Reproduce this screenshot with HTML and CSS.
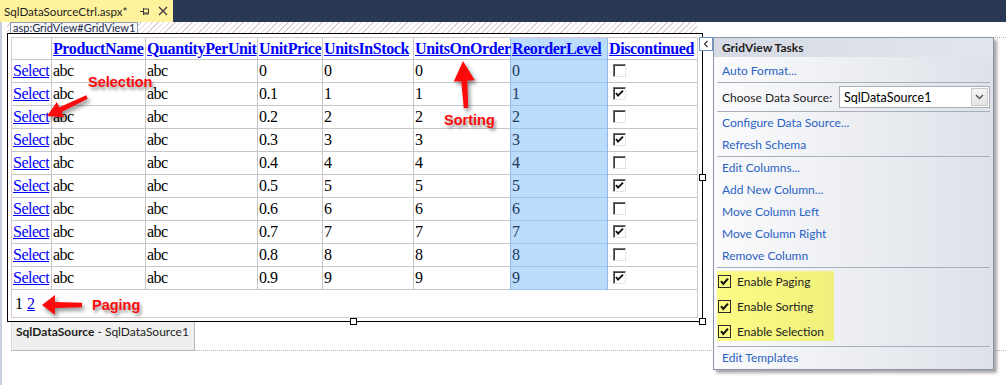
FILE: index.html
```html
<!DOCTYPE html>
<html>
<head>
<meta charset="utf-8">
<title>SqlDataSourceCtrl.aspx</title>
<link rel="stylesheet" href="styles.css">
</head>
<body>
<div class="page">
  <header class="topbar">
    <div class="tab">
      <span class="tab-title">SqlDataSourceCtrl.aspx*</span>
      <svg class="tab-pin" width="9" height="9" viewBox="0 0 9 9"><path d="M0 4.5H3M3.5 1V8M3.5 2H8.5V7H3.5M3.5 6H8.5" fill="none" stroke="#3a3a3a" stroke-width="1"/></svg>
      <svg class="tab-close" width="10" height="10" viewBox="0 0 10 10"><path d="M1 1L9 9M9 1L1 9" stroke="#3a3a3a" stroke-width="1.3"/></svg>
    </div>
  </header>

  <main class="workspace">
    <div class="tagrow"><span class="taglabel">asp:GridView#GridView1</span></div>
    <div class="gridrow">
      <div class="gridbox">
        <table class="grid">
          <thead>
            <tr class="head">
              <th class="c1"></th>
              <th class="c2"><a>ProductName</a></th>
              <th class="c3"><a>QuantityPerUnit</a></th>
              <th class="c4"><a>UnitPrice</a></th>
              <th class="c5"><a>UnitsInStock</a></th>
              <th class="c6 pre-hl"><a>UnitsOnOrder</a></th>
              <th class="c7 hl"><a>ReorderLevel</a></th>
              <th class="c8"><a>Discontinued</a></th>
            </tr>
          </thead>
          <tbody>
            <tr class="row"><td><a>Select</a></td><td>abc</td><td>abc</td><td>0</td><td>0</td><td class="pre-hl">0</td><td class="hl">0</td><td><span class="cb"></span></td></tr>
            <tr class="row"><td><a>Select</a></td><td>abc</td><td>abc</td><td>0.1</td><td>1</td><td class="pre-hl">1</td><td class="hl">1</td><td><span class="cb on"><svg viewBox="0 0 13 13" width="13" height="13"><path d="M3 6L5 8.6L10 3.6" fill="none" stroke="#111" stroke-width="1.9"/></svg></span></td></tr>
            <tr class="row"><td><a>Select</a></td><td>abc</td><td>abc</td><td>0.2</td><td>2</td><td class="pre-hl">2</td><td class="hl">2</td><td><span class="cb"></span></td></tr>
            <tr class="row"><td><a>Select</a></td><td>abc</td><td>abc</td><td>0.3</td><td>3</td><td class="pre-hl">3</td><td class="hl">3</td><td><span class="cb on"><svg viewBox="0 0 13 13" width="13" height="13"><path d="M3 6L5 8.6L10 3.6" fill="none" stroke="#111" stroke-width="1.9"/></svg></span></td></tr>
            <tr class="row"><td><a>Select</a></td><td>abc</td><td>abc</td><td>0.4</td><td>4</td><td class="pre-hl">4</td><td class="hl">4</td><td><span class="cb"></span></td></tr>
            <tr class="row"><td><a>Select</a></td><td>abc</td><td>abc</td><td>0.5</td><td>5</td><td class="pre-hl">5</td><td class="hl">5</td><td><span class="cb on"><svg viewBox="0 0 13 13" width="13" height="13"><path d="M3 6L5 8.6L10 3.6" fill="none" stroke="#111" stroke-width="1.9"/></svg></span></td></tr>
            <tr class="row"><td><a>Select</a></td><td>abc</td><td>abc</td><td>0.6</td><td>6</td><td class="pre-hl">6</td><td class="hl">6</td><td><span class="cb"></span></td></tr>
            <tr class="row"><td><a>Select</a></td><td>abc</td><td>abc</td><td>0.7</td><td>7</td><td class="pre-hl">7</td><td class="hl">7</td><td><span class="cb on"><svg viewBox="0 0 13 13" width="13" height="13"><path d="M3 6L5 8.6L10 3.6" fill="none" stroke="#111" stroke-width="1.9"/></svg></span></td></tr>
            <tr class="row"><td><a>Select</a></td><td>abc</td><td>abc</td><td>0.8</td><td>8</td><td class="pre-hl">8</td><td class="hl">8</td><td><span class="cb"></span></td></tr>
            <tr class="row"><td><a>Select</a></td><td>abc</td><td>abc</td><td>0.9</td><td>9</td><td class="pre-hl">9</td><td class="hl">9</td><td><span class="cb on"><svg viewBox="0 0 13 13" width="13" height="13"><path d="M3 6L5 8.6L10 3.6" fill="none" stroke="#111" stroke-width="1.9"/></svg></span></td></tr>
            <tr class="pager"><td colspan="8"><span class="pg">1</span> <a>2</a></td></tr>
          </tbody>
        </table>
        <span class="handle h-bottom"></span>
        <span class="handle h-right"></span>
        <span class="handle h-corner"></span>
      </div>
      <div class="surface-top"></div>
    </div>
    <div class="dsrow">
      <div class="dsbox"><b>SqlDataSource</b> - SqlDataSource1</div>
      <div class="surface-bottom"></div>
    </div>
  </main>

  <span class="smarttag"><svg width="6" height="8" viewBox="0 0 6 8"><path d="M4.5 1L1.5 4L4.5 7" fill="none" stroke="#333" stroke-width="1.2"/></svg></span>

  <aside class="tasks">
    <div class="tasks-head">GridView Tasks</div>
    <div class="tasks-body">
      <a class="task">Auto Format...</a>
      <div class="sep"></div>
      <div class="choose">
        <span class="choose-label">Choose Data Source:</span>
        <div class="combo">
          <span class="combo-text">SqlDataSource1</span>
          <span class="combo-btn"><svg width="9" height="6" viewBox="0 0 9 6"><path d="M1 1L4.5 4.5L8 1" fill="none" stroke="#555" stroke-width="1.5"/></svg></span>
        </div>
      </div>
      <div class="sep"></div>
      <a class="task">Configure Data Source...</a>
      <a class="task">Refresh Schema</a>
      <div class="sep"></div>
      <a class="task">Edit Columns...</a>
      <a class="task">Add New Column...</a>
      <a class="task">Move Column Left</a>
      <a class="task">Move Column Right</a>
      <a class="task">Remove Column</a>
      <div class="sep"></div>
      <div class="opts">
        <div class="opt"><span class="box"><svg viewBox="0 0 11 11" width="11" height="11"><path d="M2 5.2L4.3 8L9 2.6" fill="none" stroke="#111" stroke-width="2"/></svg></span>Enable Paging</div>
        <div class="opt"><span class="box"><svg viewBox="0 0 11 11" width="11" height="11"><path d="M2 5.2L4.3 8L9 2.6" fill="none" stroke="#111" stroke-width="2"/></svg></span>Enable Sorting</div>
        <div class="opt"><span class="box"><svg viewBox="0 0 11 11" width="11" height="11"><path d="M2 5.2L4.3 8L9 2.6" fill="none" stroke="#111" stroke-width="2"/></svg></span>Enable Selection</div>
      </div>
      <div class="sep"></div>
      <a class="task">Edit Templates</a>
    </div>
  </aside>

  <svg class="arrows" width="1006" height="385" viewBox="0 0 1006 385">
    <g transform="translate(87 97) rotate(154.6)"><polygon points="0,-1.8 29.3,-2.6 29.3,-8.5 44.3,0 29.3,8.5 29.3,2.6 0,1.8"/></g>
    <g transform="translate(466 108) rotate(-93.65)"><polygon points="0,-2.2 27.1,-3 27.1,-10.5 47.1,0 27.1,10.5 27.1,3 0,2.2"/></g>
    <g transform="translate(82 305) rotate(180)"><polygon points="0,-2.2 27,-3 27,-10 40,0 27,10 27,3 0,2.2"/></g>
  </svg>
  <span class="note note-sel">Selection</span>
  <span class="note note-sort">Sorting</span>
  <span class="note note-page">Paging</span>
</div>
</body>
</html>
```

FILE: styles.css
```css
* { box-sizing: border-box; }
html, body { margin: 0; padding: 0; background: #ffffff; }
body {
  width: 1006px;
  height: 385px;
  overflow: hidden;
  font-family: "Lato", "Liberation Sans", sans-serif;
  font-size: 12px;
  color: #1e1e1e;
}
.page { position: relative; width: 1006px; height: 385px; }

/* ---------- document tab bar ---------- */
.topbar { height: 22px; background: #293955; display: flex; }
.tab {
  width: 173px;
  height: 22px;
  background: #fff29d;
  display: flex;
  align-items: center;
  padding-left: 4px;
  font-size: 11.6px;
  color: #1e1e1e;
}
.tab-pin { margin-left: 12px; }
.tab-close { margin-left: 9px; }

/* ---------- design surface ---------- */
.workspace {
  height: 363px;
  border-left: 2px solid #c9cde0;
  padding-left: 5px;
}
.tagrow {
  width: 690px;
  height: 11px;
  background: repeating-linear-gradient(-45deg, #dfcfcf 0, #dfcfcf 1px, #ffffff 1px, #ffffff 4px);
  padding-left: 3px;
}
.taglabel {
  display: inline-block;
  height: 11px;
  line-height: 10px;
  padding: 0 2px;
  background: #f7f7f9;
  border: 1px solid #8f9bb7;
  border-bottom: none;
  font-size: 11px;
  color: #1e2d4b;
  vertical-align: top;
}
.gridrow { display: flex; align-items: flex-start; }
.gridbox {
  position: relative;
  width: 696px;
  border: 1px solid #000;
  padding: 3px 4px 3px 3px;
}
.surface-top {
  flex: 1;
  margin-top: 4px;
  border-top: 1px dotted #b4b4b4;
}

/* ---------- the grid ---------- */
.grid {
  width: 687px;
  table-layout: fixed;
  border-collapse: separate;
  border-spacing: 0;
  border: 1px solid #dac9c9;
  font-family: "Liberation Serif", "Times New Roman", serif;
  font-size: 16px;
  letter-spacing: -0.5px;
  color: #000;
}
.grid th, .grid td {
  padding: 0 1px;
  border-right: 1px solid #c6c6c6;
  border-bottom: 1px solid #c6c6c6;
  text-align: left;
  vertical-align: middle;
  white-space: nowrap;
  font-weight: normal;
  line-height: 18px;
}
.grid th { font-weight: bold; letter-spacing: -0.4px; }
.grid th:last-child, .grid td:last-child { border-right: none; }
.grid a { color: #0000ff; text-decoration: underline; }
.c1 { width: 40px; }
.c2 { width: 94px; }
.c3 { width: 112px; }
.c4 { width: 65px; }
.c5 { width: 91px; }
.c6 { width: 97px; }
.c7 { width: 97px; }
.c8 { width: 89px; }
.head { height: 22px; }
.row { height: 23px; }
.grid .pre-hl { border-right-color: #8fbbe8; }
.grid .hl {
  background: #bcdcfb;
  border-right-color: #8fbbe8;
  border-bottom-color: #9cc4ec;
  color: #233a5c;
}
.grid .pager td {
  height: 27px;
  border: none;
  padding-left: 3px;
  letter-spacing: 0;
}
.pg { color: #000; }
.cb {
  display: inline-block;
  width: 13px;
  height: 13px;
  margin-left: 4px;
  vertical-align: -1px;
  border: 1px solid;
  border-color: #6e6e6e #e2e2e2 #e2e2e2 #6e6e6e;
  box-shadow: inset 1px 1px 0 #3c3c3c;
  background: #fff;
  position: relative;
}
.cb svg { position: absolute; left: -1px; top: -1px; }

.handle {
  position: absolute;
  width: 7px;
  height: 7px;
  border: 1px solid #000;
  background: #fff;
}
.h-bottom { left: 342px; bottom: -4px; }
.h-right { right: -4px; top: 140px; }
.h-corner { right: -4px; bottom: -4px; }

.dsrow { display: flex; padding-left: 4px; }
.dsbox {
  width: 184px;
  height: 29px;
  background: #efefef;
  border-right: 1px solid #b9b9b9;
  border-bottom: 1px solid #b9b9b9;
  border-left: 1px solid #d8d8d8;
  padding: 2px 0 0 4px;
  font-family: "Lato", "Liberation Sans", sans-serif;
  font-size: 12px;
  color: #1e1e1e;
  white-space: nowrap;
}
.dsbox b { font-weight: bold; }
.surface-bottom { flex: 1; height: 29px; border-bottom: 1px dotted #b4b4b4; }

/* ---------- smart tag ---------- */
.smarttag {
  position: absolute;
  left: 699px;
  top: 37px;
  width: 14px;
  height: 14px;
  background: #fff;
  border: 1px solid #7196c9;
  display: flex;
  align-items: center;
  justify-content: center;
}

/* ---------- tasks panel ---------- */
.tasks {
  position: absolute;
  left: 713px;
  top: 37px;
  width: 281px;
  height: 333px;
  border: 1px solid #8a93a5;
  background: linear-gradient(to right, #fbfbfc, #dde1e8);
  box-shadow: 3px 3px 3px rgba(0, 0, 0, 0.35);
  display: flex;
  flex-direction: column;
}
.tasks-head {
  height: 19px;
  line-height: 19px;
  padding-left: 8px;
  font-weight: bold;
  color: #1e1e1e;
  background: linear-gradient(to right, #d5dae4, #e2e6ed);
}
.tasks-body { padding-top: 3px; display: flex; flex-direction: column; }
.task {
  height: 22px;
  line-height: 22px;
  padding-left: 8px;
  color: #2a62c4;
  white-space: nowrap;
}
.sep { height: 1px; margin: 0 3px; background: #a8afbc; }
.choose {
  height: 28px;
  display: flex;
  align-items: center;
  padding-left: 8px;
}
.choose-label { width: 117px; }
.combo {
  width: 151px;
  height: 22px;
  border: 1px solid #abadb3;
  background: #fff;
  display: flex;
  align-items: center;
  justify-content: space-between;
  padding: 0 1px 0 4px;
  font-size: 12.5px;
  color: #000;
}
.combo-btn {
  width: 17px;
  height: 18px;
  border: 1px solid #c9c9c9;
  background: linear-gradient(#f4f4f4, #e4e4e4);
  display: flex;
  align-items: center;
  justify-content: center;
}
.opts {
  margin: 3px 0 5px 3px;
  width: 117px;
  height: 70px;
  padding: 1px 0 1px 1px;
  background: linear-gradient(to right, #fbfb86, #f0f07c);
  display: flex;
  flex-direction: column;
  gap: 7px;
}
.opt {
  height: 18px;
  display: flex;
  align-items: center;
  gap: 6px;
  color: #1e1e1e;
  white-space: nowrap;
}
.box {
  width: 13px;
  height: 13px;
  border: 1px solid #2b2b2b;
  display: flex;
  align-items: center;
  justify-content: center;
}

/* ---------- annotations ---------- */
.arrows {
  position: absolute;
  left: 0;
  top: 0;
  pointer-events: none;
  fill: #ff0a0a;
  filter: drop-shadow(2px 3px 2px rgba(0, 0, 0, 0.45));
}
.note {
  position: absolute;
  font-family: "Liberation Sans", Arial, sans-serif;
  font-weight: bold;
  font-size: 14.5px;
  line-height: 17px;
  color: #ff0a0a;
  text-shadow: 2px 3px 3px rgba(0, 0, 0, 0.4);
  white-space: nowrap;
}
.note-sel { left: 88px; top: 74px; }
.note-sort { left: 444px; top: 112px; }
.note-page { left: 92px; top: 297px; }
```
